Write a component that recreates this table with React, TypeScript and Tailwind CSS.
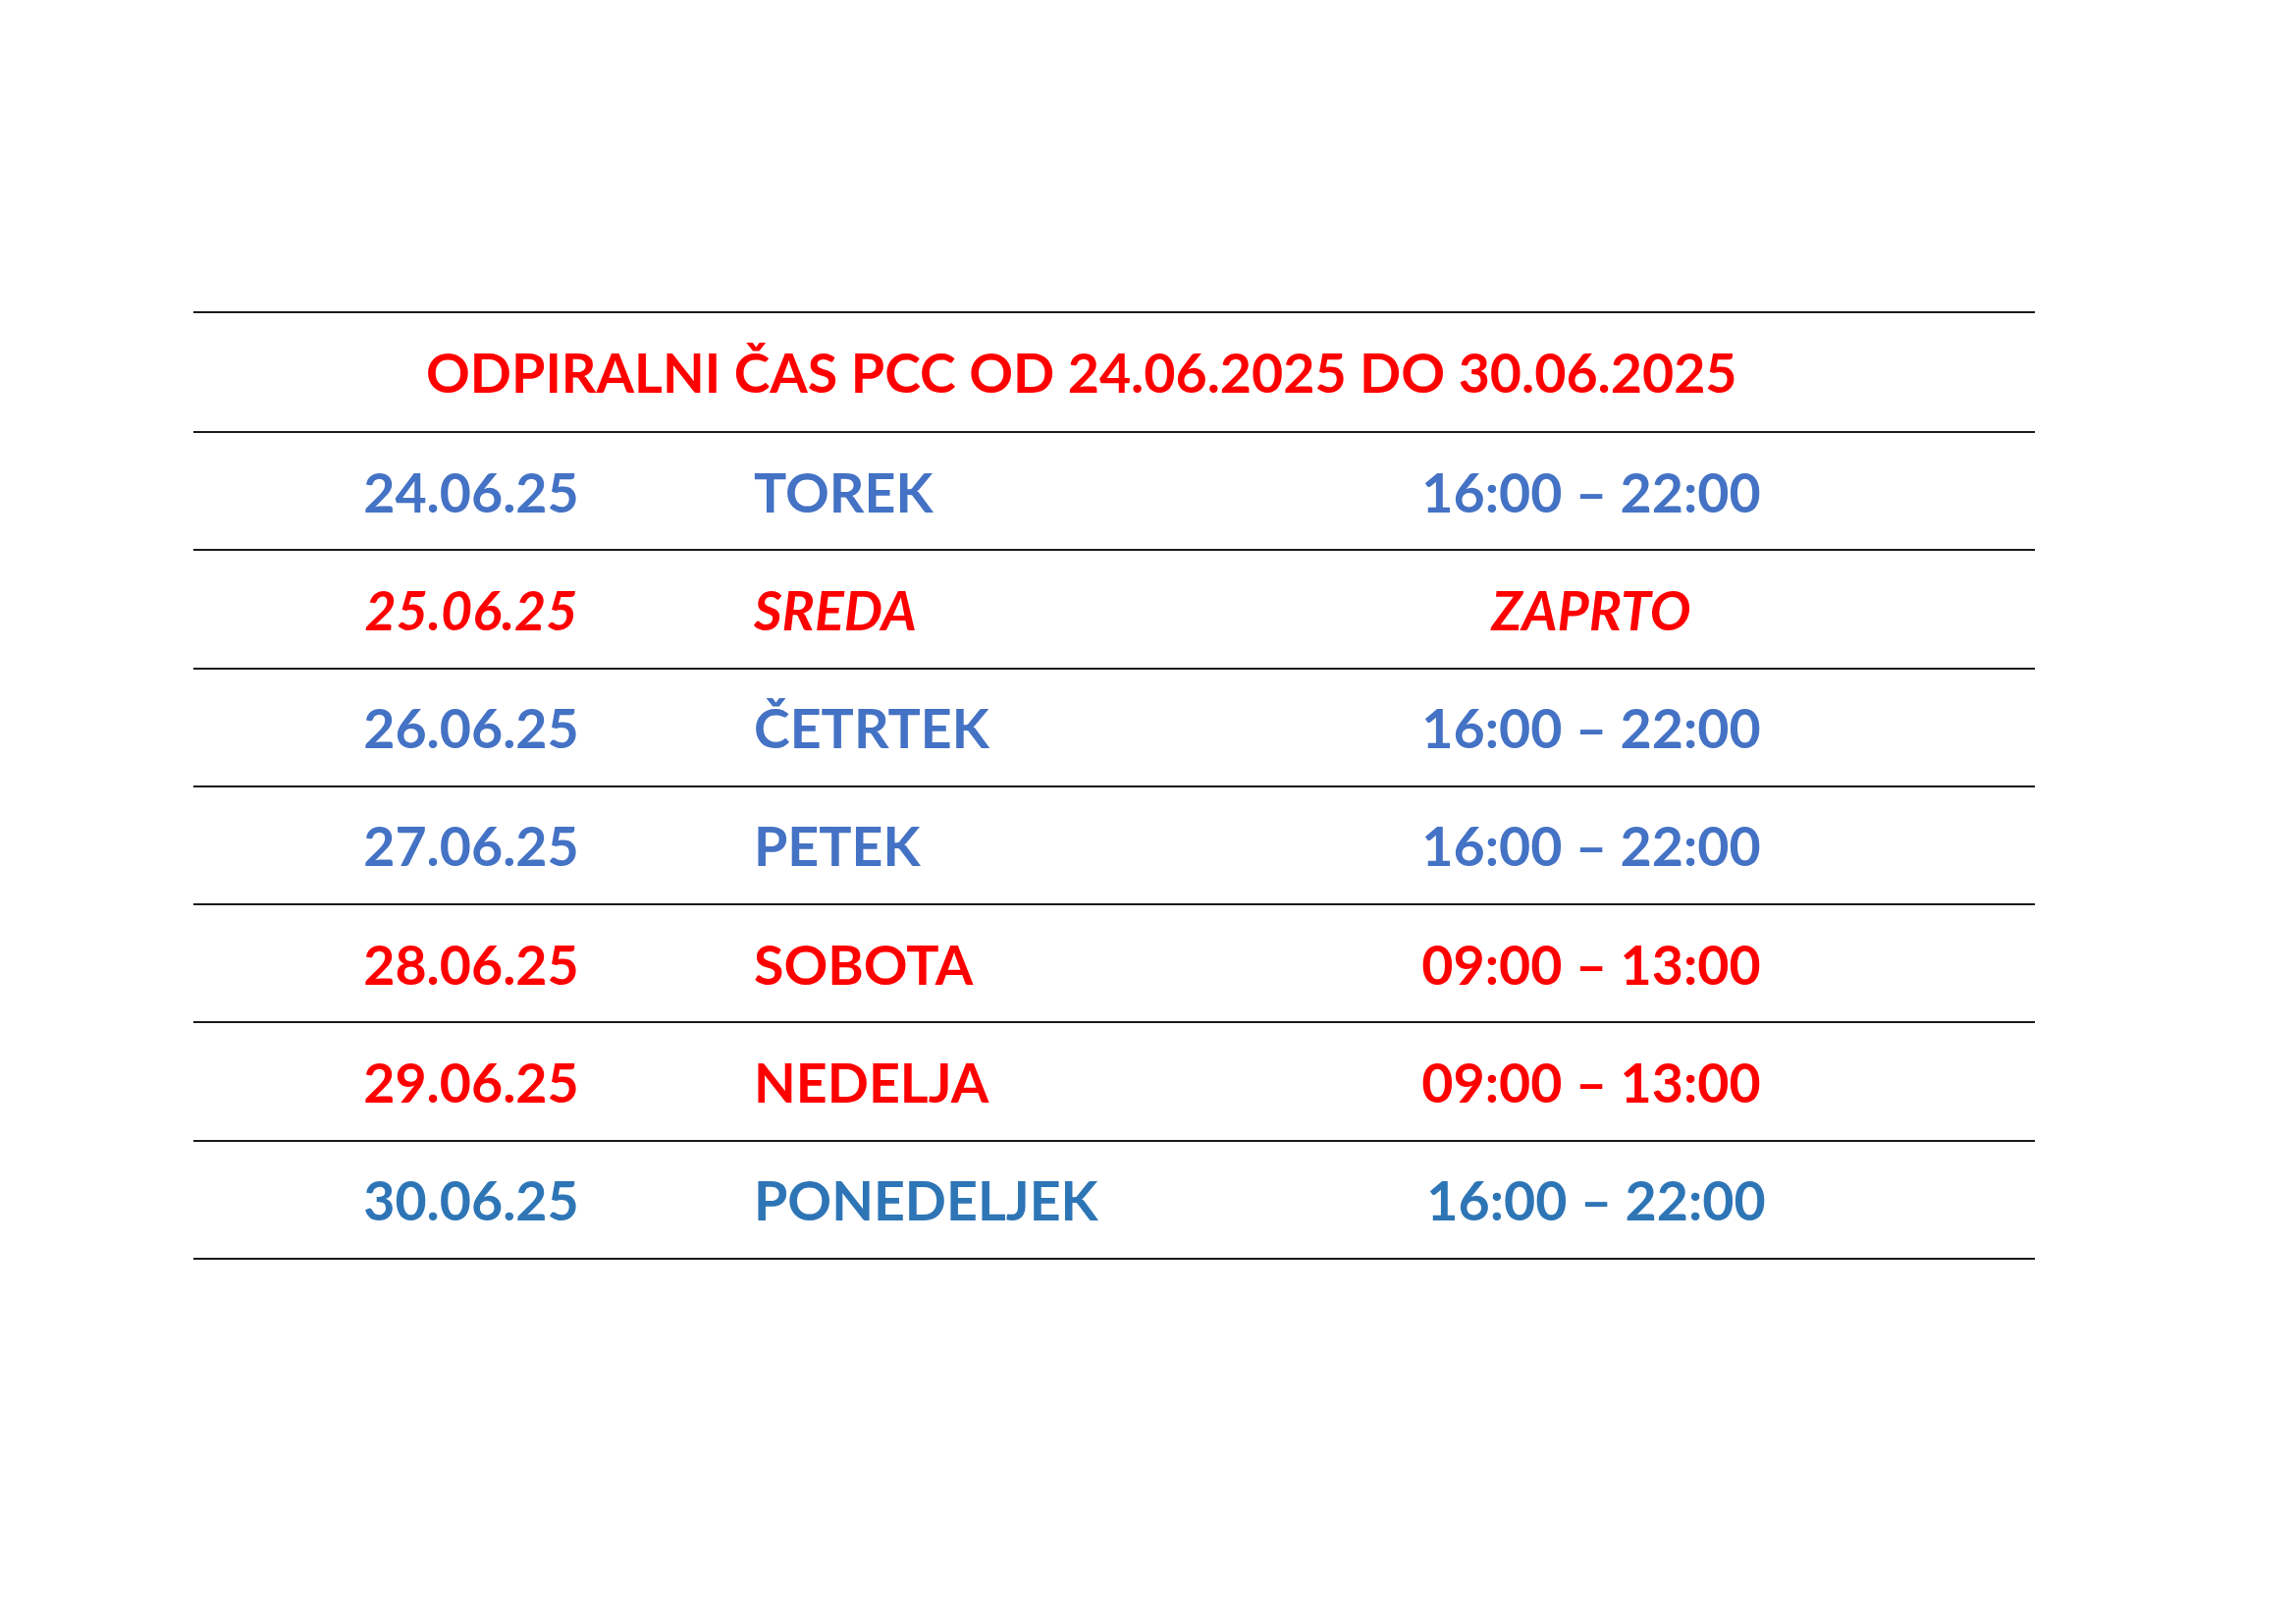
import React from 'react';

type Row = {
  date: string;
  day: string;
  hours: string;
  tone: 'blue' | 'red' | 'dark';
  italic?: boolean;
};

const rows: Row[] = [
  { date: '24.06.25', day: 'TOREK', hours: '16:00 – 22:00', tone: 'blue' },
  { date: '25.06.25', day: 'SREDA', hours: 'ZAPRTO', tone: 'red', italic: true },
  { date: '26.06.25', day: 'ČETRTEK', hours: '16:00 – 22:00', tone: 'blue' },
  { date: '27.06.25', day: 'PETEK', hours: '16:00 – 22:00', tone: 'blue' },
  { date: '28.06.25', day: 'SOBOTA', hours: '09:00 – 13:00', tone: 'red' },
  { date: '29.06.25', day: 'NEDELJA', hours: '09:00 – 13:00', tone: 'red' },
  { date: '30.06.25', day: 'PONEDELJEK', hours: '16:00 – 22:00', tone: 'dark' },
];

const toneClass = {
  blue: 'text-[#4472c4]',
  red: 'text-[#ff0000]',
  dark: 'text-[#2e75b6]',
};

const App = () => {
  return (
    <div className="w-full min-h-screen bg-white font-['Lato','Liberation_Sans',sans-serif] font-bold">
      <div className="pt-[317px] pl-[197px]">
        <div className="w-[1876px] border-b-2 border-[#1a1a1a]">
          {/* Title row */}
          <div className="h-[122px] border-t-2 border-[#1a1a1a] flex items-center pl-[237px] text-[55.5px] text-[#ff0000]">
            ODPIRALNI ČAS PCC OD 24.06.2025 DO 30.06.2025
          </div>

          {rows.map((r) => (
            <div
              key={r.date}
              className={`h-[120.3px] border-t-2 border-[#1a1a1a] grid grid-cols-[566px_554px_608px_1fr] items-center text-[55.5px] ${toneClass[r.tone]} ${r.italic ? 'italic' : ''}`}
            >
              <div className="text-center">{r.date}</div>
              <div className="pl-[5px]">{r.day}</div>
              <div className={`text-center ${r.tone === 'dark' ? 'pl-[10px]' : ''}`}>{r.hours}</div>
              <div />
            </div>
          ))}
        </div>
      </div>
    </div>
  );
};

export default App;
